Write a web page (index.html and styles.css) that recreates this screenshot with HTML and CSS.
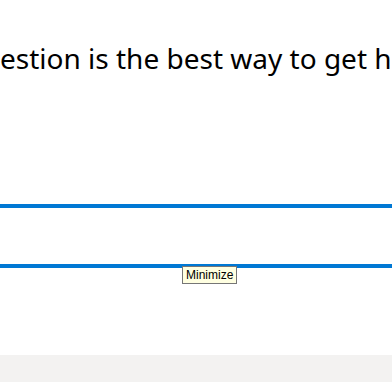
FILE: index.html
```html
<!DOCTYPE html>
<html lang="en">
<head>
    <meta charset="UTF-8">
    <meta name="viewport" content="width=device-width, initial-scale=1.0">
    <title>Ask a question</title>
    <link rel="stylesheet" href="styles.css">
</head>
<body>
    <div class="page">
        <p class="intro">estion is the best way to get help</p>

        <div class="panel">
            <div class="panel-body"></div>
            <div class="tooltip">Minimize</div>
        </div>

        <div class="spacer"></div>
    </div>
    <div class="footer"></div>
</body>
</html>
```

FILE: styles.css
```css
  body {
      font-family: 'Noto Sans', 'Open Sans', sans-serif;
      background-color: #fff;
      color: #000;
      margin: 0;
      padding: 0;
      overflow: hidden;
  }
  .page {
      height: 355px;
      display: flex;
      flex-direction: column;
  }
  .intro {
      margin: 0;
      padding-top: 38px;
      height: 204px;
      box-sizing: border-box;
      font-size: 28px;
      line-height: 40px;
      white-space: nowrap;
      overflow: hidden;
  }
  /* panel between the two blue rules */
  .panel {
      position: relative;
      border-top: 4px solid #0078d4;
      border-bottom: 4px solid #0078d4;
  }
  .panel-body {
      height: 56px;
  }
  .tooltip {
      position: absolute;
      left: 182px;
      top: 58px;
      padding: 1px 3px;
      font-family: 'Liberation Sans', Arial, sans-serif;
      font-size: 12px;
      line-height: 14px;
      color: #000;
      background-color: #ffffe1;
      border: 1px solid #767676;
  }
  .spacer {
      flex: 1;
  }
  .footer {
      height: 27px;
      background-color: #f3f2f1;
  }
```
